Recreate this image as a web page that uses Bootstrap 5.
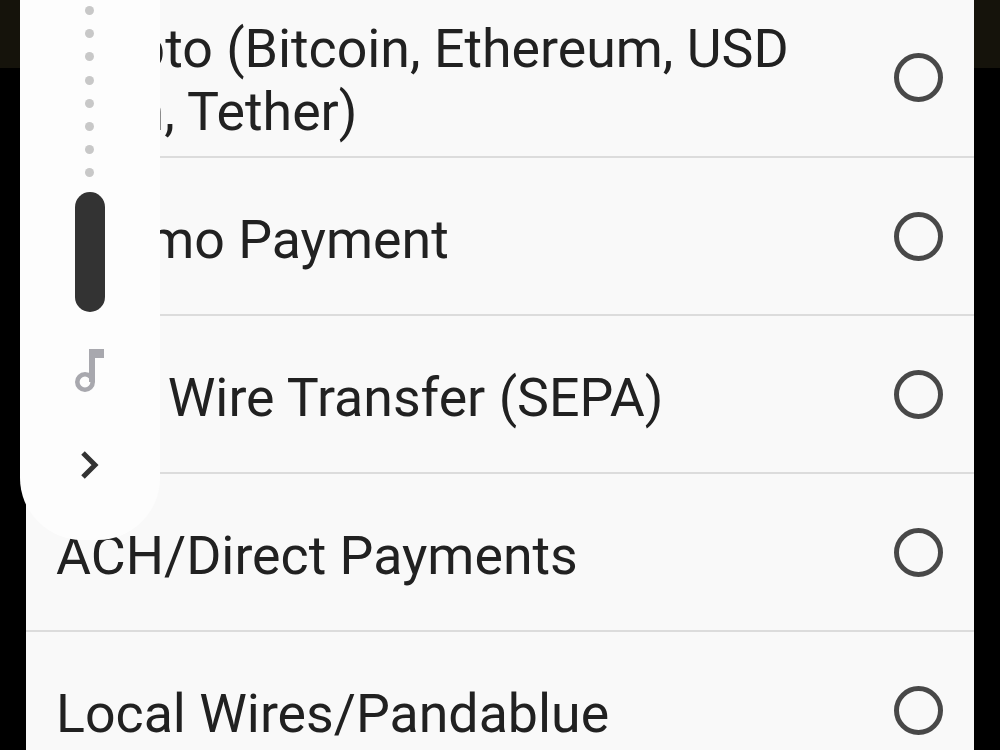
<!DOCTYPE html>
<html lang="en">
<head>
    <meta charset="UTF-8">
    <meta name="viewport" content="width=device-width, initial-scale=1.0">
    <title>Payment Methods</title>
    <link href="https://cdn.jsdelivr.net/npm/bootstrap@5.3.0/dist/css/bootstrap.min.css" rel="stylesheet">
    <style>
        html, body {
            height: 750px;
            overflow: hidden;
            background: #000;
        }
        .top-strip {
            height: 68px;
            background: #15130b;
        }
        .sheet {
            height: 750px;
            overflow: hidden;
            margin: -68px 26px 0;
            background: #f9f9f9;
            font-family: Roboto, "Noto Sans", sans-serif;
            color: #212121;
        }
        .pay-row {
            height: 158px;
            padding: 0 31px 0 30px;
            border-bottom: 2px solid #dcdcdc;
            font-size: 53.7px;
            line-height: 62px;
        }
        .pay-row:first-child {
            height: 158px;
            align-items: flex-end !important;
            line-height: 63px;
            padding-bottom: 13px;
        }
        .pay-row:not(:first-child) .pay-label {
            padding-top: 7px;
        }
        .pay-label {
            max-width: 760px;
        }
        .radio-ring {
            flex: none;
            width: 49px;
            height: 49px;
            border: 5px solid #484848;
            border-radius: 50%;
        }
        .pay-row:first-child .radio-ring {
            margin-bottom: 41px;
        }
        .edge-panel {
            position: absolute;
            left: 20px;
            top: -40px;
            width: 140px;
            height: 580px;
            background: #fdfdfd;
            border-radius: 0 0 62px 62px;
        }
        .dot-step {
            width: 9px;
            height: 9px;
            border-radius: 50%;
            background: #c8c8c8;
        }
        .dot-stack {
            top: 46px;
            left: 65px;
            gap: 14.2px;
        }
        .scroll-thumb {
            position: absolute;
            left: 55px;
            top: 232px;
            width: 30px;
            height: 120px;
            border-radius: 15px;
            background: #333;
        }
        .note-icon {
            position: absolute;
            left: 55px;
            top: 388px;
        }
        .chev-icon {
            position: absolute;
            left: 58px;
            top: 490px;
        }
    </style>
</head>
<body>
    <div class="top-strip"></div>
    <div class="sheet">
        <div class="pay-row d-flex align-items-center justify-content-between">
            <div class="pay-label">Crypto (Bitcoin, Ethereum, USD Coin, Tether)</div>
            <div class="radio-ring"></div>
        </div>
        <div class="pay-row d-flex align-items-center justify-content-between">
            <div class="pay-label">Venmo Payment</div>
            <div class="radio-ring"></div>
        </div>
        <div class="pay-row d-flex align-items-center justify-content-between">
            <div class="pay-label">EUR Wire Transfer (SEPA)</div>
            <div class="radio-ring"></div>
        </div>
        <div class="pay-row d-flex align-items-center justify-content-between">
            <div class="pay-label">ACH/Direct Payments</div>
            <div class="radio-ring"></div>
        </div>
        <div class="pay-row d-flex align-items-center justify-content-between">
            <div class="pay-label">Local Wires/Pandablue</div>
            <div class="radio-ring"></div>
        </div>
    </div>
    <div class="edge-panel">
        <div class="dot-stack position-absolute d-flex flex-column">
            <div class="dot-step"></div>
            <div class="dot-step"></div>
            <div class="dot-step"></div>
            <div class="dot-step"></div>
            <div class="dot-step"></div>
            <div class="dot-step"></div>
            <div class="dot-step"></div>
            <div class="dot-step"></div>
        </div>
        <div class="scroll-thumb"></div>
        <svg class="note-icon" width="32" height="46" viewBox="0 0 32 46">
            <path d="M17 1V34" stroke="#a8a8ae" stroke-width="6" fill="none"/>
            <path d="M15 1H29V10H15Z" fill="#a8a8ae"/>
            <circle cx="10" cy="34" r="7.7" fill="none" stroke="#a8a8ae" stroke-width="4.6"/>
        </svg>
        <svg class="chev-icon" width="24" height="32" viewBox="0 0 24 32">
            <path d="M5 3L17 15L5 27" fill="none" stroke="#333" stroke-width="5"/>
        </svg>
    </div>
    <script src="https://cdn.jsdelivr.net/npm/bootstrap@5.3.0/dist/js/bootstrap.bundle.min.js"></script>
</body>
</html>
